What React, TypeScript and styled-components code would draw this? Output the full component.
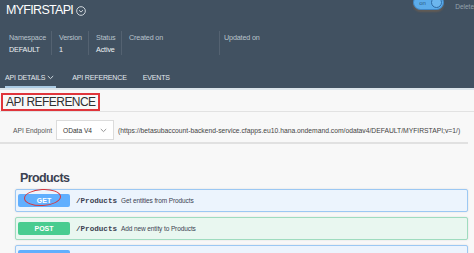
import React from 'react';
import styled, { createGlobalStyle } from 'styled-components';

const GlobalStyle = createGlobalStyle`
  html, body {
    margin: 0;
    padding: 0;
    width: 474px;
    height: 253px;
    overflow: hidden;
    background: #f8f8f8;
  }
  body {
    font-family: "Liberation Sans", Arial, sans-serif;
  }
`;

const metaColumns = [
  { label: 'Namespace', value: 'DEFAULT', width: 50 },
  { label: 'Version', value: '1', width: 37 },
  { label: 'Status', value: 'Active', width: 33 },
  { label: 'Created on', value: '', width: 98 },
  { label: 'Updated on', value: '', width: 0 }
];

const operations = [
  { method: 'GET', label: 'GET', path: '/Products', summary: 'Get entities from Products', marked: true },
  { method: 'POST', label: 'POST', path: '/Products', summary: 'Add new entity to Products', marked: false },
  // third row is only peeking in at the bottom edge
  { method: 'GET', label: '', path: '', summary: '', marked: false }
];

const App = () => {
  return (
    <>
      <GlobalStyle />
      <Page>
        <Header>
          <TopRow>
            <TitleGroup>
              <Title>MYFIRSTAPI</Title>
              <svg width="10" height="10" viewBox="0 0 12 12">
                <circle cx="6" cy="6" r="5.2" fill="none" stroke="#e9eef2" strokeWidth="1" />
                <path d="M3.6 5 L6 7.3 L8.4 5" fill="none" stroke="#e9eef2" strokeWidth="1" />
              </svg>
            </TitleGroup>
            <Actions>
              <Toggle>
                <span>on</span>
                <Knob />
              </Toggle>
              <DeleteText>Delete</DeleteText>
            </Actions>
          </TopRow>

          <MetaGrid>
            {metaColumns.map((col) => (
              <MetaCell key={col.label} $width={col.width}>
                <MetaLabel>{col.label}</MetaLabel>
                <MetaValue>{col.value || '\u00a0'}</MetaValue>
              </MetaCell>
            ))}
          </MetaGrid>

          <Tabs>
            <Tab $active>
              API DETAILS
              <svg width="7" height="5" viewBox="0 0 7 5">
                <path d="M0.8 1 L3.5 3.6 L6.2 1" fill="none" stroke="#dfe6eb" strokeWidth="0.9" />
              </svg>
            </Tab>
            <Tab>API REFERENCE</Tab>
            <Tab>EVENTS</Tab>
          </Tabs>
        </Header>

        <HeadingBar>
          <MarkedHeading>API REFERENCE</MarkedHeading>
        </HeadingBar>

        <EndpointRow>
          <EndpointLabel>API Endpoint</EndpointLabel>
          <Select>
            OData V4
            <svg width="7" height="5" viewBox="0 0 7 5">
              <path d="M0.8 1 L3.5 3.6 L6.2 1" fill="none" stroke="#8a8a8a" strokeWidth="0.9" />
            </svg>
          </Select>
          <EndpointUrl>
            (https://betasubaccount-backend-service.cfapps.eu10.hana.ondemand.com/odatav4/DEFAULT/MYFIRSTAPI;v=1/)
          </EndpointUrl>
        </EndpointRow>

        <Section>
          <SectionTitle>Products</SectionTitle>
          <OpList>
            {operations.map((op, i) => (
              <OpBlock key={i} $method={op.method}>
                <MethodBadge $method={op.method}>{op.label}</MethodBadge>
                {op.path && <OpPath>{op.path}</OpPath>}
                {op.summary && <OpSummary>{op.summary}</OpSummary>}
                {op.marked && <RedEllipse />}
              </OpBlock>
            ))}
          </OpList>
        </Section>
      </Page>
    </>
  );
};

export default App;

const methodColors: Record<string, { main: string; bg: string; border: string }> = {
  GET: { main: '#61affe', bg: '#ecf4fd', border: '#9cc8f3' },
  POST: { main: '#49cc90', bg: '#e9f7f0', border: '#9fdcbf' }
};

const Page = styled.div`
  width: 474px;
  height: 253px;
  overflow: hidden;
  background: #f8f8f8;
`;

const Header = styled.header`
  height: 88px;
  background: #415161;
  border-bottom: 2px solid #dbe4ea;
  display: flex;
  flex-direction: column;
`;

const TopRow = styled.div`
  display: flex;
  justify-content: space-between;
  align-items: flex-start;
  padding: 2px 0 0 6px;
  height: 31px;
  box-sizing: border-box;
`;

const TitleGroup = styled.div`
  display: flex;
  align-items: center;
  gap: 3px;

  svg {
    margin-top: 1px;
  }
`;

const Title = styled.h1`
  margin: 0;
  font-size: 12.5px;
  line-height: 16px;
  font-weight: 400;
  letter-spacing: -0.7px;
  color: #ffffff;
`;

const Actions = styled.div`
  display: flex;
  align-items: flex-start;
  gap: 11px;
  margin-top: -7px;
`;

const Toggle = styled.div`
  width: 31px;
  height: 15px;
  box-sizing: border-box;
  border-radius: 8px;
  background: #5cacea;
  border: 1px solid #3f86c4;
  display: flex;
  align-items: center;
  justify-content: space-between;
  padding: 0 1px 0 5px;
  box-shadow: 0 2px 2px rgba(160, 110, 60, 0.35);

  span {
    font-size: 6px;
    color: #2d5d86;
    line-height: 8px;
  }
`;

const Knob = styled.div`
  width: 11px;
  height: 11px;
  box-sizing: border-box;
  border-radius: 50%;
  border: 1.5px solid #2f6aa3;
  background: #6cb6ee;
`;

const DeleteText = styled.span`
  font-size: 6.5px;
  line-height: 10px;
  color: #95a3ae;
  margin-top: 7px;
  white-space: nowrap;
`;

const MetaGrid = styled.div`
  display: flex;
  padding-left: 2px;
`;

const MetaCell = styled.div<{ $width: number }>`
  flex: ${(p) => (p.$width ? `0 0 ${p.$width}px` : '1 1 auto')};
  box-sizing: border-box;
  padding: 2px 0 1px 7px;
  border-right: ${(p) => (p.$width ? '1px solid rgba(255, 255, 255, 0.1)' : 'none')};
  display: flex;
  flex-direction: column;
  gap: 3px;

  &:last-child {
    padding-left: 4px;
  }
`;

const MetaLabel = styled.span`
  font-size: 7.2px;
  line-height: 9px;
  letter-spacing: -0.15px;
  color: #b9c3cc;
  white-space: nowrap;
`;

const MetaValue = styled.span`
  font-size: 7.2px;
  line-height: 9px;
  letter-spacing: -0.15px;
  color: #eef1f4;
  white-space: nowrap;
`;

const Tabs = styled.nav`
  margin-top: auto;
  display: flex;
  gap: 16px;
  padding-left: 5px;
  height: 20px;
`;

const Tab = styled.div<{ $active?: boolean }>`
  display: flex;
  align-items: center;
  gap: 2px;
  box-sizing: border-box;
  font-size: 7px;
  letter-spacing: -0.15px;
  color: #e3e9ee;
  white-space: nowrap;
  padding-right: ${(p) => (p.$active ? '2px' : '0')};
  border-bottom: 2px solid ${(p) => (p.$active ? '#a9c9e2' : 'transparent')};
`;

const HeadingBar = styled.div`
  padding: 3px 0 0 1px;
  border-bottom: 1px solid #e2e2e2;
`;

const MarkedHeading = styled.h2`
  display: inline-block;
  margin: 0;
  border: 2px solid #e0353b;
  padding: 0 2px 0 3px;
  font-size: 12px;
  line-height: 14px;
  font-weight: 400;
  letter-spacing: -0.55px;
  color: #2f2f2f;
  vertical-align: top;
`;

const EndpointRow = styled.div`
  display: flex;
  align-items: center;
  padding: 8px 0 2px 13px;
  margin-right: 6px;
  border-bottom: 2px solid #e1e1e1;
`;

const EndpointLabel = styled.span`
  font-size: 6.7px;
  color: #555;
  margin-right: 4px;
  white-space: nowrap;
`;

const Select = styled.div`
  flex: 0 0 58px;
  height: 20px;
  box-sizing: border-box;
  background: #fff;
  border: 1px solid #dcdcdc;
  display: flex;
  align-items: center;
  justify-content: space-between;
  padding: 0 6px;
  font-size: 6.6px;
  color: #333;
  white-space: nowrap;
  margin-right: 4px;
`;

const EndpointUrl = styled.span`
  font-size: 6.75px;
  color: #444;
  white-space: nowrap;
`;

const Section = styled.section`
  padding: 25px 6px 0 15px;
`;

const SectionTitle = styled.h3`
  margin: 0 0 2px 5px;
  font-size: 12.5px;
  line-height: 18px;
  font-weight: 700;
  letter-spacing: -0.6px;
  color: #3b4151;
`;

const OpList = styled.div`
  display: flex;
  flex-direction: column;
  gap: 5px;
`;

const OpBlock = styled.div<{ $method: string }>`
  position: relative;
  height: 23px;
  box-sizing: border-box;
  display: flex;
  align-items: center;
  padding-left: 2px;
  border: 1px solid ${(p) => methodColors[p.$method].border};
  background: ${(p) => methodColors[p.$method].bg};
  border-radius: 2px;
  box-shadow: 0 0 2px rgba(0, 0, 0, 0.12);
`;

const MethodBadge = styled.span<{ $method: string }>`
  flex: 0 0 52px;
  height: 13px;
  border-radius: 2px;
  background: ${(p) => methodColors[p.$method].main};
  color: #fff;
  font-size: 7px;
  font-weight: 700;
  display: flex;
  align-items: center;
  justify-content: center;
  margin-right: 6px;
`;

const OpPath = styled.span`
  font-family: "Liberation Mono", "Courier New", monospace;
  font-size: 7.6px;
  font-weight: 700;
  color: #3b4151;
  margin-right: 4px;
`;

const OpSummary = styled.span`
  font-size: 6.5px;
  letter-spacing: -0.1px;
  color: #3b4151;
`;

const RedEllipse = styled.div`
  position: absolute;
  left: 8px;
  top: -1px;
  width: 37px;
  height: 17px;
  box-sizing: border-box;
  border: 1.5px solid #d6363c;
  border-radius: 50%;
  transform: rotate(-3deg);
`;
